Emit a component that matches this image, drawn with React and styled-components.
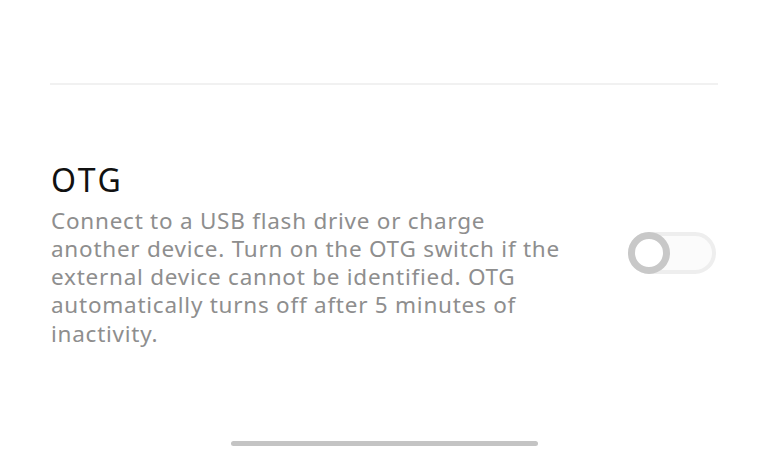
import React, { useState } from "react";
import styled, { createGlobalStyle } from "styled-components";

const GlobalStyle = createGlobalStyle`
	html, body {
		margin: 0;
		padding: 0;
		background: #ffffff;
	}
	body {
		font-family: "Noto Sans", "Open Sans", sans-serif;
	}
`;

const Page = styled.div`
	height: 449px;
	display: flex;
	flex-direction: column;
	padding: 0 50px;
	box-sizing: border-box;
	overflow: hidden;
`;

const Divider = styled.div`
	margin-top: 83px;
	height: 2px;
	background: #f1f1f1;
`;

const Row = styled.div`
	margin-top: 75px;
	display: flex;
	align-items: center;
	justify-content: space-between;
`;

const Text = styled.div`
	width: 522px;
`;

const Title = styled.h2`
	margin: 0 0 6.5px 1px;
	font-size: 32px;
	line-height: 40px;
	font-weight: 400;
	letter-spacing: 2.6px;
	color: #111111;
`;

const Desc = styled.p`
	margin: 0 0 0 1px;
	font-size: 22.5px;
	line-height: 28.3px;
	letter-spacing: 0.75px;
	color: #8e8e8e;
`;

const Track = styled.button`
	width: 88px;
	height: 42px;
	margin: -1px 2px 0 0;
	padding: 0;
	border-radius: 21px;
	border: 4px solid ${(p) => (p.$on ? "#3482ff" : "#eeeeee")};
	background: ${(p) => (p.$on ? "#3482ff" : "#fbfbfb")};
	box-sizing: border-box;
	display: flex;
	align-items: center;
	justify-content: ${(p) => (p.$on ? "flex-end" : "flex-start")};
	cursor: pointer;
`;

const Knob = styled.span`
	width: 42px;
	height: 42px;
	margin: -4px;
	border-radius: 50%;
	border: 7px solid ${(p) => (p.$on ? "#ffffff" : "#c8c8c8")};
	background: #ffffff;
	box-sizing: border-box;
`;

const Spacer = styled.div`
	flex: 1;
`;

const HomeBar = styled.div`
	align-self: center;
	width: 307px;
	height: 5px;
	margin-bottom: 3px;
	border-radius: 3px;
	background: #c4c4c4;
`;

const App = () => {
	const [on, setOn] = useState(false);
	return (
		<>
			<GlobalStyle />
			<Page>
				<Divider />
				<Row>
					<Text>
						<Title>OTG</Title>
						<Desc>
							Connect to a USB flash drive or charge another device. Turn on the
							OTG switch if the external device cannot be identified. OTG
							automatically turns off after 5 minutes of inactivity.
						</Desc>
					</Text>
					<Track $on={on} onClick={() => setOn(!on)}>
						<Knob $on={on} />
					</Track>
				</Row>
				<Spacer />
				<HomeBar />
			</Page>
		</>
	);
};

export default App;
